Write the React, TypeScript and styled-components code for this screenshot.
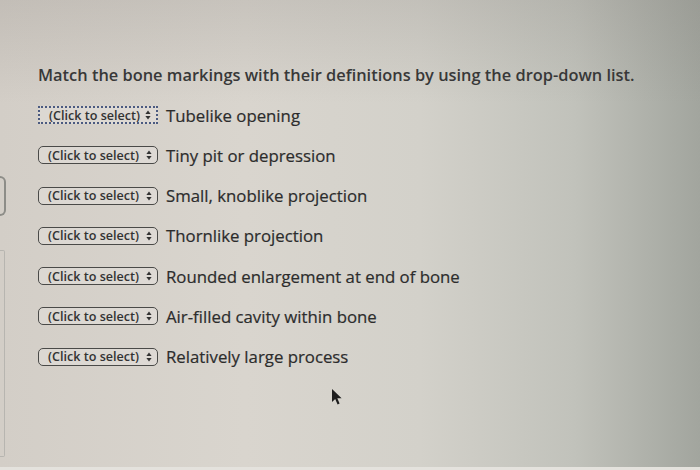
import React from "react";
import styled, { createGlobalStyle } from "styled-components";

const Global = createGlobalStyle`
  html, body { margin: 0; padding: 0; }
  body {
    width: 700px;
    height: 470px;
    overflow: hidden;
    font-family: "Open Sans", "Liberation Sans", sans-serif;
  }
`;

const Screen = styled.div`
  position: relative;
  width: 700px;
  height: 470px;
  display: flex;
  background:
    linear-gradient(180deg, rgba(120, 115, 110, 0.18) 0%, rgba(120, 115, 110, 0) 22%),
    linear-gradient(90deg, #d3cec7 0%, #d9d5ce 35%, #d3d1ca 60%, #c1c2bb 82%, #a2a59e 100%);
  &::after {
    content: "";
    position: absolute;
    left: 0;
    right: 0;
    bottom: 0;
    height: 3px;
    background: #e4e2dd;
  }
`;

const Gutter = styled.div`
  width: 6px;
  flex: none;
  display: flex;
  flex-direction: column;
  padding-top: 176px;
  gap: 34px;
`;

const Knob = styled.div`
  height: 36px;
  width: 4px;
  border: 2px solid #8d8d88;
  border-left: none;
  border-radius: 0 16px 16px 0;
`;

const Panel = styled.div`
  height: 205px;
  width: 4px;
  border: 1px solid #b7b5b0;
  border-left: none;
  border-radius: 0 2px 2px 0;
`;

const Content = styled.div`
  flex: 1;
  padding: 63px 0 0 32px;
`;

const Prompt = styled.div`
  font-size: 16.4px;
  font-weight: 600;
  color: #383838;
  letter-spacing: 0;
  margin-bottom: 20px;
`;

const List = styled.div`
  display: flex;
  flex-direction: column;
  gap: 22.3px;
`;

const Row = styled.div`
  display: flex;
  align-items: center;
  height: 18px;
  gap: 8px;
`;

const Select = styled.div<{ $focused?: boolean }>`
  width: 120px;
  height: 18px;
  box-sizing: border-box;
  display: flex;
  align-items: center;
  justify-content: space-between;
  padding: 0 5px 0 9px;
  font-size: 12.6px;
  font-weight: 600;
  letter-spacing: 0;
  color: #333;
  white-space: nowrap;
  border: ${(p) => (p.$focused ? "2px dotted #4b5a80" : "1.5px solid #4a4a48")};
  border-radius: ${(p) => (p.$focused ? "0" : "5px")};
  background: rgba(235, 233, 228, 0.35);
`;

const Arrows = styled.svg`
  width: 6px;
  height: 10px;
  flex: none;
`;

const Label = styled.span`
  font-size: 16.8px;
  font-weight: 400;
  color: #2c2c2c;
  -webkit-text-stroke: 0.2px #2c2c2c;
  white-space: nowrap;
`;

const Cursor = styled.svg`
  position: absolute;
  left: 331px;
  top: 388px;
  width: 12px;
  height: 18px;
`;

const definitions = [
  "Tubelike opening",
  "Tiny pit or depression",
  "Small, knoblike projection",
  "Thornlike projection",
  "Rounded enlargement at end of bone",
  "Air-filled cavity within bone",
  "Relatively large process",
];

export default function App() {
  return (
    <>
      <Global />
      <Screen>
        <Gutter>
          <Knob />
          <Panel />
        </Gutter>
        <Content>
          <Prompt>Match the bone markings with their definitions by using the drop-down list.</Prompt>
          <List>
            {definitions.map((d, i) => (
              <Row key={d}>
                <Select $focused={i === 0}>
                  (Click to select)
                  <Arrows viewBox="0 0 6 10">
                    <path d="M3 0.5 L5.6 4 H0.4 Z" fill="#333" />
                    <path d="M3 9.5 L5.6 6 H0.4 Z" fill="#333" />
                  </Arrows>
                </Select>
                <Label>{d}</Label>
              </Row>
            ))}
          </List>
        </Content>
        <Cursor viewBox="0 0 12 18">
          <path d="M1 1 L1 14 L4.2 11 L6.6 16.5 L8.6 15.6 L6.3 10.3 L10.6 10.3 Z" fill="#1e1e1e" />
        </Cursor>
      </Screen>
    </>
  );
}
